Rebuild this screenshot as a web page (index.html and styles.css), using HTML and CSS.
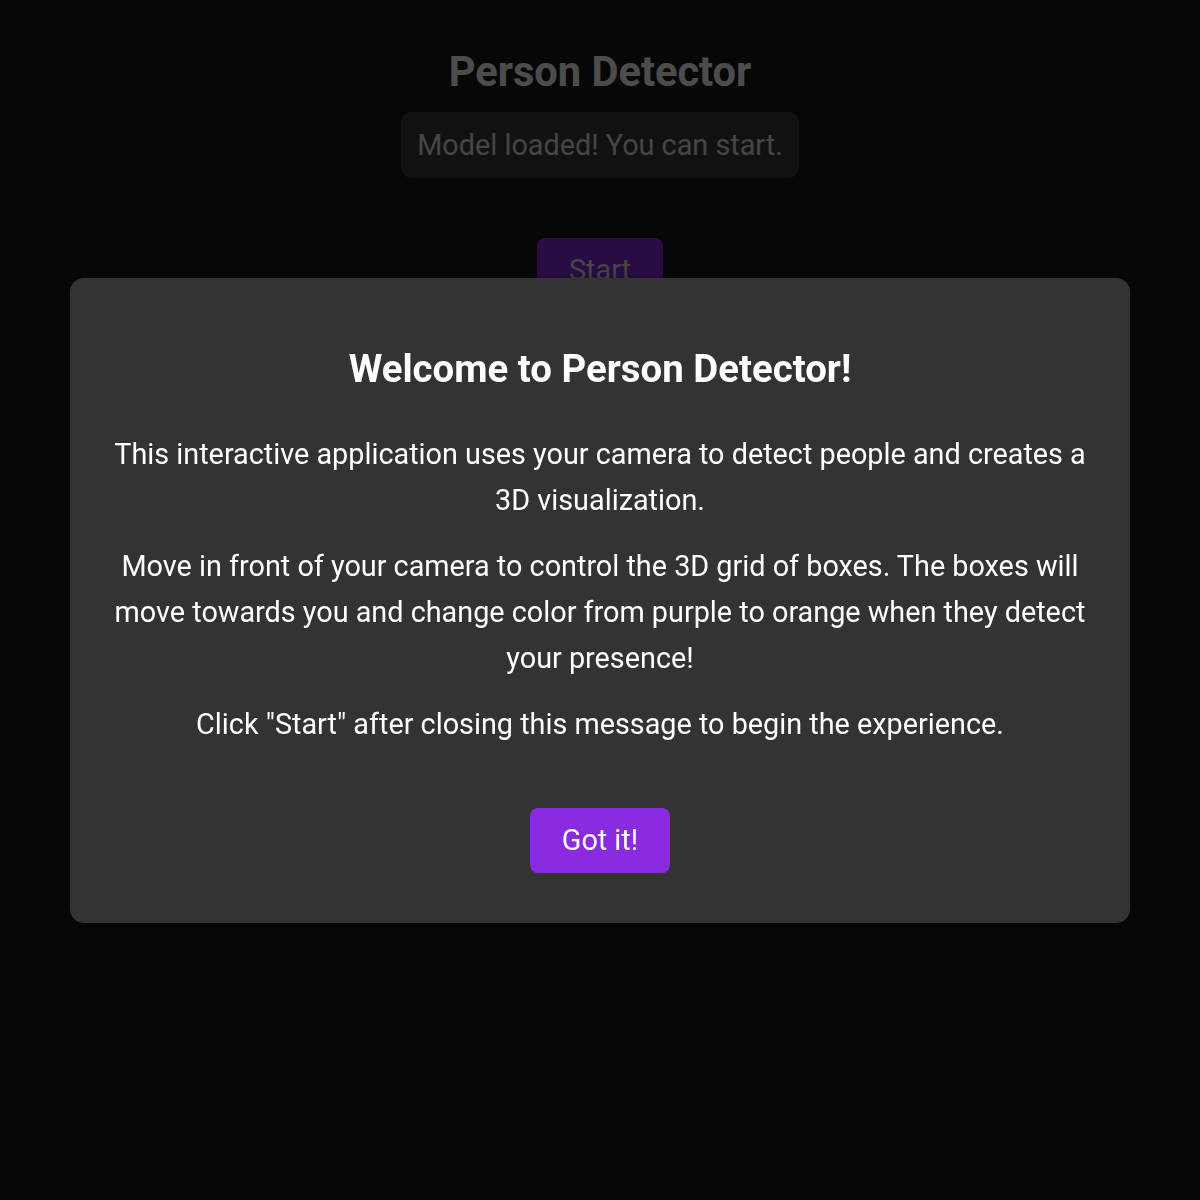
FILE: index.html
```html
<!DOCTYPE html>
<html lang="en">
<head>
<meta charset="utf-8">
<title>Person Detector</title>
<link rel="stylesheet" href="styles.css">
</head>
<body>
<main class="app">
  <h1 class="app-title">Person Detector</h1>
  <div class="status">Model loaded! You can start.</div>
  <button class="start-btn">Start</button>
</main>
<div class="overlay">
  <div class="modal">
    <h2 class="modal-title">Welcome to Person Detector!</h2>
    <p class="modal-text">This interactive application uses your camera to detect people and creates a 3D visualization.</p>
    <p class="modal-text">Move in front of your camera to control the 3D grid of boxes. The boxes will move towards you and change color from purple to orange when they detect your presence!</p>
    <p class="modal-text">Click "Start" after closing this message to begin the experience.</p>
    <button class="modal-btn">Got it!</button>
  </div>
</div>
</body>
</html>
```
FILE: styles.css
```css
* { box-sizing: border-box; }
html, body {
  margin: 0;
  padding: 0;
  height: 100%;
}
body {
  background: #181818;
  color: #ffffff;
  font-family: Roboto, "Liberation Sans", sans-serif;
}
.app {
  display: flex;
  flex-direction: column;
  align-items: center;
  padding-top: 48px;
}
.app-title {
  margin: 0;
  font-size: 41.6px;
  line-height: 48px;
  font-weight: 700;
  color: #ffffff;
}
.status {
  margin-top: 16px;
  background: #393939;
  color: #e6e6e6;
  font-size: 28.8px;
  line-height: 34px;
  padding: 16px 16px;
  border-radius: 10px;
}
.start-btn {
  margin-top: 60px;
  width: 126px;
  height: 64px;
  background: #8a2be2;
  color: #e6e6e6;
  border: none;
  border-radius: 8px;
  font-family: inherit;
  font-size: 28.8px;
}
.overlay {
  position: fixed;
  inset: 0;
  background: rgba(0, 0, 0, 0.7);
  display: flex;
  align-items: center;
  justify-content: center;
}
.modal {
  width: 1060px;
  background: #333333;
  border-radius: 14px;
  padding: 68px 40px 50px;
  text-align: center;
  box-shadow: 0 4px 16px rgba(0, 0, 0, 0.5);
  display: flex;
  flex-direction: column;
  align-items: center;
}
.modal-title {
  margin: 0 0 39px;
  font-size: 38.4px;
  line-height: 46px;
  font-weight: 700;
  color: #ffffff;
}
.modal-text {
  margin: 0 0 20px;
  font-size: 28.8px;
  line-height: 46px;
  color: #ffffff;
}
.modal-btn {
  margin-top: 41px;
  width: 140px;
  height: 65px;
  background: #8a2be2;
  color: #ffffff;
  border: none;
  border-radius: 8px;
  font-family: inherit;
  font-size: 28.8px;
}
```
